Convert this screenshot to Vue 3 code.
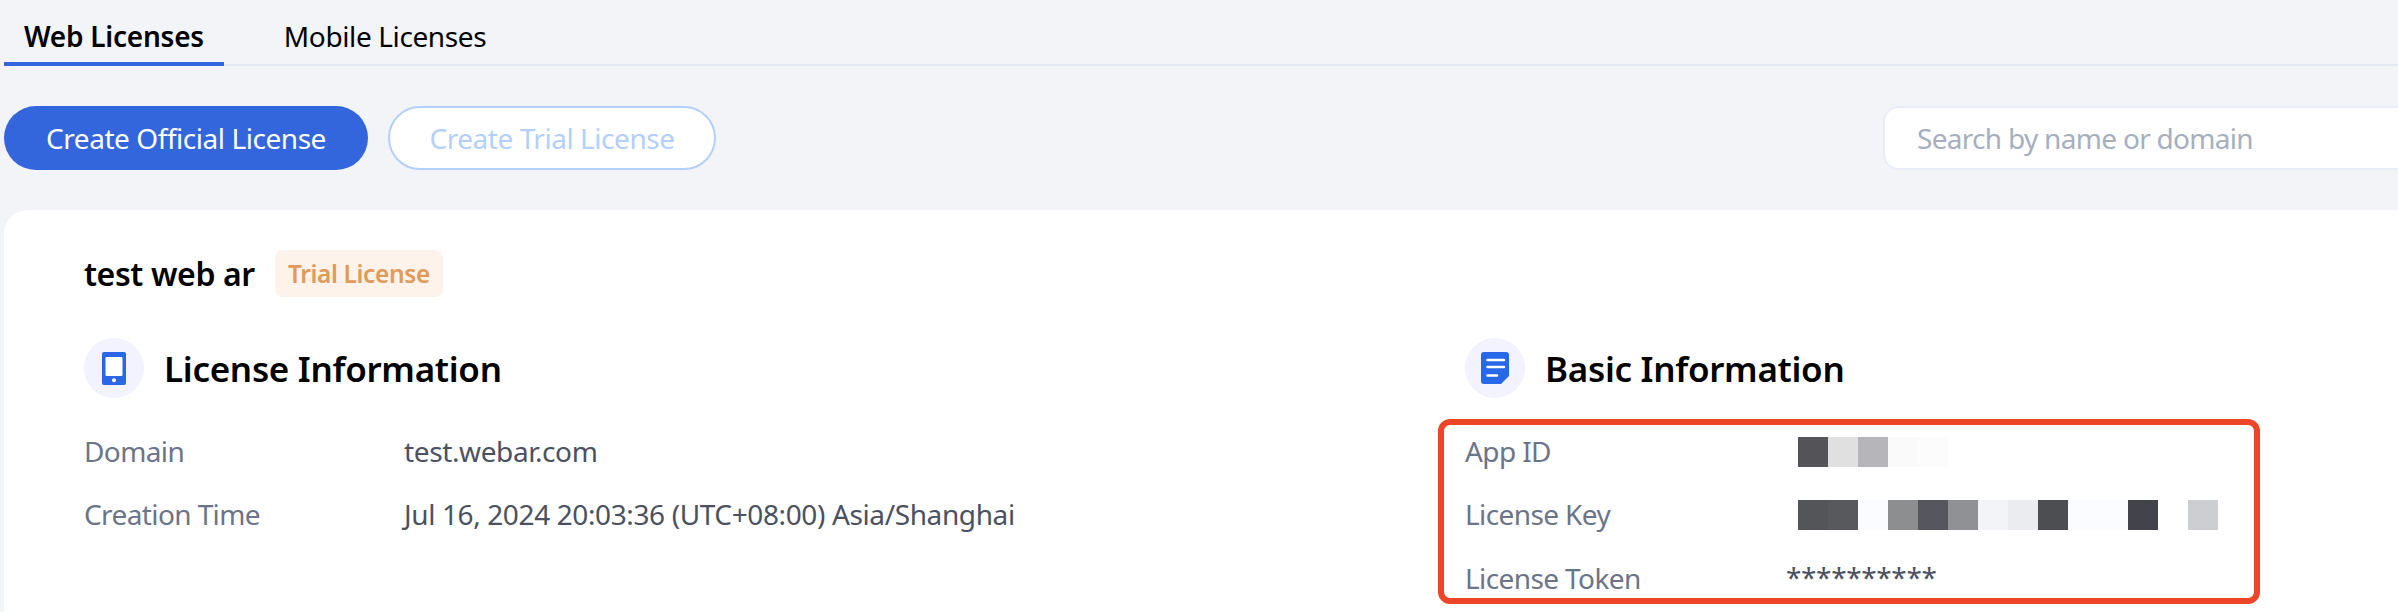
<template>
  <div class="page">
    <div class="tabs">
      <div v-for="(tab, i) in tabs" :key="tab" class="tab" :class="{ active: i === 0 }">{{ tab }}</div>
    </div>

    <div class="toolbar">
      <button class="btn primary">Create Official License</button>
      <button class="btn ghost">Create Trial License</button>
      <input class="search" type="text" placeholder="Search by name or domain" />
    </div>

    <div class="card">
      <div class="card-title">
        <span class="name">test web ar</span>
        <span class="badge">Trial License</span>
      </div>

      <div class="columns">
        <section class="col-left">
          <div class="heading">
            <span class="icon-wrap">
              <svg width="24" height="33" viewBox="0 0 24 33">
                <rect width="24" height="33" rx="2" fill="#2a66e6" />
                <rect x="3.5" y="5" width="17" height="19" rx="1" fill="#fff" />
                <circle cx="12" cy="28.3" r="2" fill="#fff" />
              </svg>
            </span>
            <h2>License Information</h2>
          </div>
          <div v-for="row in licenseRows" :key="row.label" class="row">
            <span class="label">{{ row.label }}</span>
            <span class="value">{{ row.value }}</span>
          </div>
        </section>

        <section class="col-right">
          <div class="heading">
            <span class="icon-wrap">
              <svg width="28" height="32" viewBox="0 0 28 32">
                <path d="M3 0H25Q28 0 28 3V24L20 32H3Q0 32 0 29V3Q0 0 3 0Z" fill="#2668e8" />
                <path d="M6.5 8H23M6.5 15H23M6.5 23.500H16" stroke="#fff" stroke-width="2.600" stroke-linecap="round" fill="none" />
              </svg>
            </span>
            <h2>Basic Information</h2>
          </div>
          <div class="row">
            <span class="label wide">App ID</span>
            <span class="blur">
              <i v-for="(c, i) in appIdBlocks" :key="i" :style="{ background: c }"></i>
            </span>
          </div>
          <div class="row">
            <span class="label wide">License Key</span>
            <span class="blur">
              <i v-for="(c, i) in keyBlocks" :key="i" :style="{ background: c }"></i>
            </span>
          </div>
          <div class="row">
            <span class="label wide">License Token</span>
            <span class="value token">**********</span>
          </div>
          <div class="highlight"></div>
        </section>
      </div>
    </div>
  </div>
</template>

<script setup>
const tabs = ['Web Licenses', 'Mobile Licenses']

const licenseRows = [
  { label: 'Domain', value: 'test.webar.com' },
  { label: 'Creation Time', value: 'Jul 16, 2024 20:03:36 (UTC+08:00) Asia/Shanghai' }
]

const appIdBlocks = ['#545358', '#e0e0e0', '#b6b5b9', '#fafafa', '#fcfcfd']
const keyBlocks = [
  '#545559', '#58595c', '#fbfcff', '#8d8e90', '#55565e', '#909195', '#f3f4f8',
  '#ebecf0', '#4d4e52', '#fbfcff', '#fbfcff', '#42434b', '#ffffff', '#cdced2'
]
</script>

<style>
html, body { margin: 0; background: #f2f4f8; overflow: hidden; }
</style>

<style scoped>
.page {
  width: 2398px;
  height: 612px;
  overflow: hidden;
  padding-left: 4px;
  box-sizing: border-box;
  background: #f2f4f8;
  font-family: "Noto Sans", "Open Sans", sans-serif;
  font-size: 28px;
  letter-spacing: -0.38px;
}
.tabs {
  display: flex;
  gap: 40px;
  height: 66px;
  box-sizing: border-box;
  border-bottom: 2px solid #e3e8f1;
}
.tab {
  padding: 0 20px;
  height: 66px;
  box-sizing: border-box;
  line-height: 72px;
  color: #000;
}
.tab.active {
  font-weight: 600;
  letter-spacing: -0.25px;
  border-bottom: 4px solid #3366dd;
}
.toolbar {
  display: flex;
  align-items: center;
  gap: 20px;
  margin-top: 40px;
  height: 64px;
}
.btn {
  flex: none;
  height: 64px;
  border-radius: 32px;
  font: inherit;
  letter-spacing: -0.45px;
  padding: 0;
  box-sizing: border-box;
}
.primary {
  width: 364px;
  background: #3366dd;
  border: none;
  color: #fff;
}
.ghost {
  width: 328px;
  background: #fff;
  border: 2px solid #b3cffb;
  color: #b3cffb;
}
.search {
  margin-left: 1147px;
  flex: none;
  width: 600px;
  height: 64px;
  box-sizing: border-box;
  border: 2px solid #e8ecf4;
  border-radius: 16px;
  background: #fff;
  padding: 0 32px;
  font: inherit;
  letter-spacing: -0.7px;
  outline: none;
}
.search::placeholder { color: #a7afbf; opacity: 1; }
.card {
  margin-top: 40px;
  height: 440px;
  background: #fff;
  border-radius: 24px 0 0 0;
  padding: 40px 0 0 80px;
  box-sizing: border-box;
}
.card-title {
  display: flex;
  align-items: center;
  gap: 20px;
  height: 47px;
}
.name {
  font-size: 32px;
  font-weight: 600;
  color: #000;
}
.badge {
  height: 47px;
  line-height: 48px;
  padding: 0 13px;
  border-radius: 8px;
  background: #fdf3ea;
  color: #e09a5b;
  font-size: 24.500px;
  font-weight: 600;
}
.columns {
  display: grid;
  grid-template-columns: 1381px 1fr;
  margin-top: 41px;
}
.col-right { position: relative; }
.heading {
  display: flex;
  align-items: center;
  gap: 20px;
  height: 60px;
  margin-bottom: 21px;
}
h2 {
  margin: 0;
  font-size: 35px;
  letter-spacing: -0.300px;
  font-weight: 600;
  color: #000;
}
.icon-wrap {
  width: 60px;
  height: 60px;
  border-radius: 50%;
  background: #f3f3ff;
  display: flex;
  align-items: center;
  justify-content: center;
  flex: none;
}
.row {
  display: flex;
  align-items: center;
  height: 63.500px;
}
.label {
  width: 320px;
  flex: none;
  color: #6b7489;
  letter-spacing: -0.6px;
}
.label.wide { width: 333px; }
.value { color: #4b5161; }
.token {
  margin-left: -12px;
  margin-top: -2px;
}
.blur {
  display: flex;
  margin-top: 2px;
}
.blur i {
  display: block;
  width: 30px;
  height: 30px;
}
.highlight {
  position: absolute;
  left: -27px;
  top: 81px;
  width: 822px;
  height: 185px;
  box-sizing: border-box;
  border: 6px solid #ee4528;
  border-radius: 12px;
  pointer-events: none;
}
</style>
